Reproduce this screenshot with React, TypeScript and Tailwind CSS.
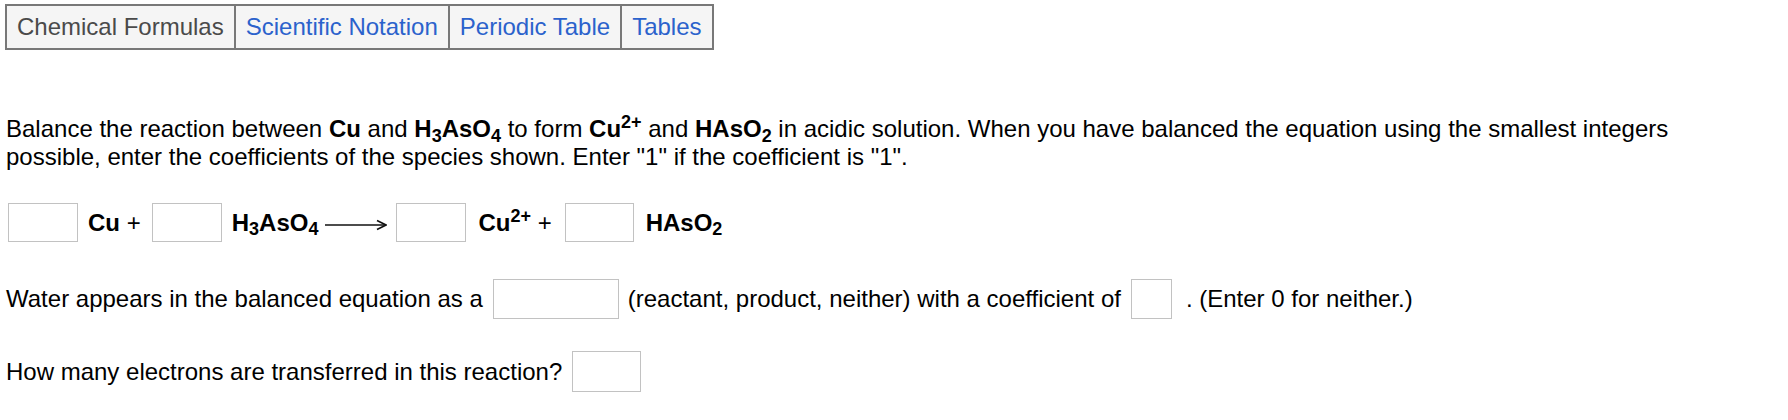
const tabs = [
  { label: "Chemical Formulas", active: true },
  { label: "Scientific Notation", active: false },
  { label: "Periodic Table", active: false },
  { label: "Tables", active: false },
];

const Box = ({ className }: { className: string }) => (
  <input
    type="text"
    className={`border border-[#c2c2c2] bg-white outline-none ${className}`}
  />
);

const Arrow = () => (
  <svg width="62" height="14" viewBox="0 0 62 14" className="mt-[5px] ml-[7px]">
    <line x1="0" y1="7" x2="61" y2="7" stroke="#111" strokeWidth="1.6" />
    <polyline points="52,2.5 61,7 52,11.5" fill="none" stroke="#111" strokeWidth="1.6" />
  </svg>
);

export default function App() {
  return (
    <div className="w-[1788px] h-[420px] bg-white text-black font-['Liberation_Sans',Arial,sans-serif] text-[24px] pl-[5px] pt-[4px]">
      <div className="inline-flex border-2 border-[#787878] bg-[#f5f5f5]">
        {tabs.map((t, i) => (
          <div
            key={t.label}
            className={`h-[42px] flex items-center px-[10px] ${i > 0 ? "border-l-2 border-[#787878]" : ""} ${
              t.active ? "text-[#4a4a4a]" : "text-[#2b62cc]"
            }`}
          >
            {t.label}
          </div>
        ))}
      </div>

      <p className="mt-[65px] leading-[28px] pl-[1px]">
        Balance the reaction between <b>Cu</b> and{" "}
        <b>
          H<sub>3</sub>AsO<sub>4</sub>
        </b>{" "}
        to form{" "}
        <b>
          Cu<sup>2+</sup>
        </b>{" "}
        and{" "}
        <b>
          HAsO<sub>2</sub>
        </b>{" "}
        in acidic solution. When you have balanced the equation using the smallest integers
        <br />
        possible, enter the coefficients of the species shown. Enter "1" if the coefficient is "1".
      </p>

      <div className="mt-[32px] flex items-center">
        <Box className="w-[70px] h-[39px] ml-[3px]" />
        <span className="ml-[10px] font-bold">
          Cu <span className="font-normal">+</span>
        </span>
        <Box className="w-[70px] h-[39px] ml-[11px]" />
        <span className="ml-[10px] font-bold">
          H<sub>3</sub>AsO<sub>4</sub>
        </span>
        <Arrow />
        <Box className="w-[70px] h-[39px] ml-[9px]" />
        <span className="ml-[12px] font-bold">
          Cu<sup>2+</sup> <span className="font-normal">+</span>
        </span>
        <Box className="w-[69px] h-[39px] ml-[13px]" />
        <span className="ml-[12px] font-bold">
          HAsO<sub>2</sub>
        </span>
      </div>

      <div className="mt-[37px] flex items-center">
        <span className="pl-[1px]">Water appears in the balanced equation as a</span>
        <Box className="w-[126px] h-[40px] ml-[10px]" />
        <span className="ml-[9px]">(reactant, product, neither) with a coefficient of</span>
        <Box className="w-[41px] h-[40px] ml-[10px]" />
        <span className="ml-[14px]">. (Enter 0 for neither.)</span>
      </div>

      <div className="mt-[32px] flex items-center">
        <span className="pl-[1px]">How many electrons are transferred in this reaction?</span>
        <Box className="w-[69px] h-[41px] ml-[10px]" />
      </div>
    </div>
  );
}
